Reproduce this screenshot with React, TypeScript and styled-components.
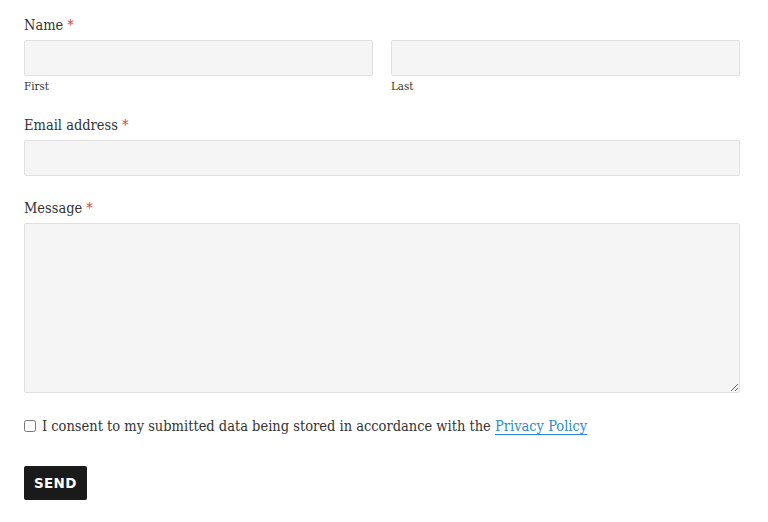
import styled, { createGlobalStyle } from "styled-components";

const GlobalStyle = createGlobalStyle`
  html, body {
    margin: 0;
    padding: 0;
    background: #fff;
  }
  body {
    font-family: "DejaVu Serif Condensed", "DejaVu Serif", "Liberation Serif", serif;
    color: #333;
  }
`;

const Form = styled.form`
  display: flex;
  flex-direction: column;
  padding: 15px 28px 0 24px;
`;

const Field = styled.div<{ $gap?: number }>`
  margin-bottom: ${(p) => p.$gap ?? 24}px;
`;

const Label = styled.label`
  display: block;
  font-size: 14.5px;
  line-height: 20px;
  margin-bottom: 5px;
  color: #333;
`;

const Required = styled.span`
  color: #d9443f;
  margin-left: 4px;
`;

const Row = styled.div`
  display: grid;
  grid-template-columns: 1fr 1fr;
  gap: 18px;
`;

const Input = styled.input`
  display: block;
  box-sizing: border-box;
  width: 100%;
  height: 36px;
  background: #f5f5f5;
  border: 1px solid #e0e0e0;
  border-radius: 2px;
  outline: none;
`;

const TextArea = styled.textarea`
  display: block;
  box-sizing: border-box;
  width: 100%;
  height: 170px;
  background: #f5f5f5;
  border: 1px solid #e0e0e0;
  border-radius: 2px;
  outline: none;
`;

const SubLabel = styled.span`
  display: block;
  font-size: 11.5px;
  line-height: 14px;
  margin-top: 3px;
  color: #333;
`;

const Consent = styled.label`
  display: flex;
  align-items: center;
  gap: 6px;
  font-size: 14.5px;
  color: #333;
  margin-bottom: 32px;
`;

const Box = styled.input`
  margin: 0;
  width: 12px;
  height: 12px;
`;

const Link = styled.a`
  color: #2a8bd4;
  text-decoration: underline;
  text-underline-offset: 3px;
`;

const SendButton = styled.button`
  align-self: flex-start;
  height: 34px;
  padding: 0 10px;
  background: #1a1a1a;
  color: #fff;
  border: none;
  border-radius: 2px;
  font-family: "DejaVu Sans", Inter, sans-serif;
  font-weight: 700;
  font-size: 13.5px;
  letter-spacing: 0.3px;
  text-transform: uppercase;
`;

export default function App() {
  return (
    <>
      <GlobalStyle />
      <Form onSubmit={(e) => e.preventDefault()}>
        <Field $gap={22}>
          <Label>
            Name<Required>*</Required>
          </Label>
          <Row>
            <div>
              <Input type="text" />
              <SubLabel>First</SubLabel>
            </div>
            <div>
              <Input type="text" />
              <SubLabel>Last</SubLabel>
            </div>
          </Row>
        </Field>
        <Field $gap={22}>
          <Label>
            Email address<Required>*</Required>
          </Label>
          <Input type="email" />
        </Field>
        <Field $gap={25}>
          <Label>
            Message<Required>*</Required>
          </Label>
          <TextArea />
        </Field>
        <Consent>
          <Box type="checkbox" />
          <span>
            I consent to my submitted data being stored in accordance with the{" "}
            <Link href="#">Privacy Policy</Link>
          </span>
        </Consent>
        <SendButton type="submit">Send</SendButton>
      </Form>
    </>
  );
}
